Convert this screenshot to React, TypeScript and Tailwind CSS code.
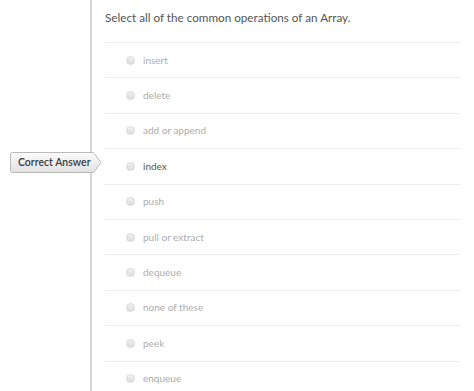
const OPTIONS = [
  'insert',
  'delete',
  'add or append',
  'index',
  'push',
  'pull or extract',
  'dequeue',
  'none of these',
  'peek',
  'enqueue',
];

const CORRECT = 'index';

function CorrectBadge() {
  return (
    <div className="relative z-10 ml-[10px] mt-[152px] flex h-[21px] w-[92px] items-center">
      <svg className="absolute inset-0" width="92" height="21" viewBox="0 0 92 21">
        <defs>
          <linearGradient id="badge" x1="0" y1="0" x2="0" y2="1">
            <stop offset="0" stopColor="#fbfbfb" />
            <stop offset="1" stopColor="#e2e2e2" />
          </linearGradient>
        </defs>
        <path
          d="M2.5 0.5 H83.5 L91 10.5 L83.5 20.5 H2.5 Q0.5 20.5 0.5 18.5 V2.5 Q0.5 0.5 2.5 0.5 Z"
          fill="url(#badge)"
          stroke="#b9b9b9"
        />
      </svg>
      <span className="relative pl-[8px] text-[10.5px] font-semibold text-[#3a3a3a]">Correct Answer</span>
    </div>
  );
}

export default function App() {
  return (
    <div className="flex min-h-[391px] w-full bg-white font-['Lato','Liberation_Sans',sans-serif]">
      {/* left gutter with badge */}
      <div className="w-[90px] shrink-0">
        <CorrectBadge />
      </div>
      <div className="w-[2px] shrink-0 bg-[#d6d6d6]" />

      {/* question */}
      <div className="flex-1 pl-[13px] pr-[14px]">
        <div className="h-[42px] pt-[9px] text-[11.7px] text-[#555]">
          Select all of the common operations of an Array.
        </div>
        {OPTIONS.map((opt) => (
          <div key={opt} className="flex h-[35.4px] items-center border-t border-[#ececec] pl-[21px]">
            <span className="h-[9px] w-[9px] rounded-full border border-[#d8d8d8] bg-gradient-to-b from-[#f2f2f2] to-[#dcdcdc]" />
            <span
              className={`ml-[8px] text-[10px] ${opt === CORRECT ? 'text-[#555]' : 'text-[#adadad]'}`}
            >
              {opt}
            </span>
          </div>
        ))}
      </div>
    </div>
  );
}
